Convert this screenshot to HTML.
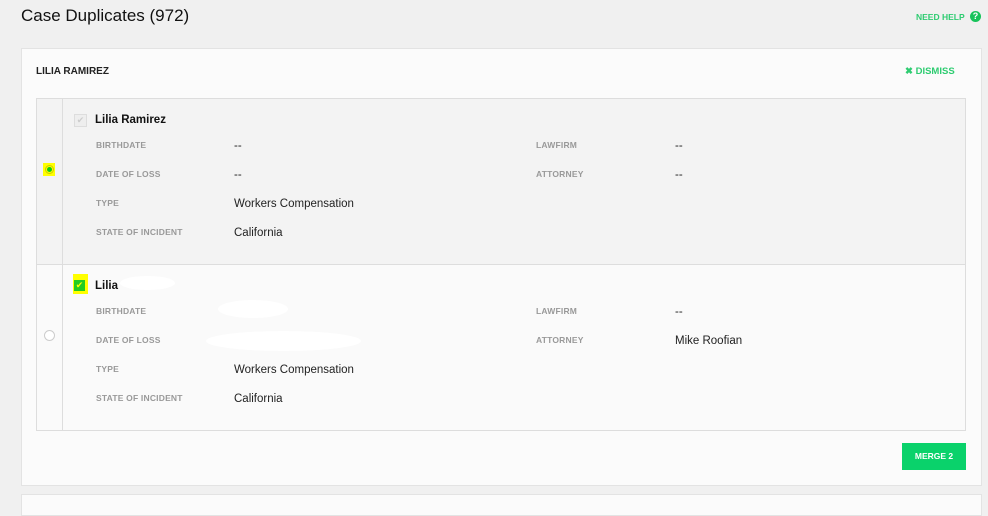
<!DOCTYPE html><html><head><style>
body{margin:0;width:988px;height:501px;background:#f0f0f0;font-family:"Liberation Sans",sans-serif;position:relative;overflow:hidden}
.a{position:absolute;white-space:nowrap}
.lbl{font-size:8.5px;font-weight:bold;color:#999;letter-spacing:.2px}
.val{font-size:11.5px;color:#222}
</style></head><body>
<div class="a" style="left:21px;top:6px;font-size:17px;color:#111">Case Duplicates (972)</div>
<div class="a" style="left:916px;top:12px;font-size:8.5px;font-weight:bold;color:#2ecc71">NEED HELP</div>
<div class="a" style="left:970px;top:11px;width:11px;height:11px;border-radius:50%;background:#17c35a;color:#fff;font-size:9px;font-weight:bold;text-align:center;line-height:11px">?</div>
<div class="a" style="left:21px;top:48px;width:959px;height:436px;background:#fbfbfb;border:1px solid #e3e3e3"></div>
<div class="a" style="left:21px;top:494px;width:959px;height:20px;background:#fbfbfb;border:1px solid #e3e3e3"></div>
<div class="a" style="left:36px;top:66px;font-size:10px;font-weight:bold;color:#222">LILIA RAMIREZ</div>
<div class="a" style="left:905px;top:66px;font-size:9.5px;font-weight:bold;color:#2ecc71">✖ DISMISS</div>
<div class="a" style="left:36px;top:98px;width:928px;height:165px;background:#f3f3f3;border:1px solid #ddd"></div>
<div class="a" style="left:36px;top:264px;width:928px;height:165px;background:#fafafa;border:1px solid #ddd"></div>
<div class="a" style="left:62px;top:98px;width:1px;height:332px;background:#ddd"></div>
<div class="a" style="left:43px;top:163px;width:12px;height:13px;background:#ff0"></div>
<div class="a" style="left:45px;top:165px;width:7px;height:7px;border-radius:50%;border:1px solid #cc0;background:#ff0"></div>
<div class="a" style="left:47px;top:167px;width:5px;height:5px;border-radius:50%;background:#1c1"></div>
<div class="a" style="left:44px;top:330px;width:9px;height:9px;border-radius:50%;border:1px solid #ccc;background:#fff"></div>
<div class="a" style="left:74px;top:114px;width:11px;height:11px;border:1px solid #ddd;background:#eee;color:#ccc;font-size:9px;line-height:11px;text-align:center">✔</div>
<div class="a" style="left:73px;top:274px;width:15px;height:20px;background:#ff0"></div>
<div class="a" style="left:74px;top:280px;width:11px;height:11px;background:#2c2;color:#ff0;font-size:9px;line-height:11px;text-align:center">✔</div>
<div class="a" style="left:95px;top:114px;font-size:11.5px;font-weight:bold;color:#111">Lilia Ramirez</div>
<div class="a" style="left:95px;top:280px;font-size:11.5px;font-weight:bold;color:#111">Lilia</div>
<div class="a lbl" style="left:96px;top:140px">BIRTHDATE</div><div class="a val" style="left:234px;top:140px">--</div>
<div class="a lbl" style="left:536px;top:140px">LAWFIRM</div><div class="a val" style="left:675px;top:140px">--</div>
<div class="a lbl" style="left:96px;top:169px">DATE OF LOSS</div><div class="a val" style="left:234px;top:169px">--</div>
<div class="a lbl" style="left:536px;top:169px">ATTORNEY</div><div class="a val" style="left:675px;top:169px">--</div>
<div class="a lbl" style="left:96px;top:198px">TYPE</div><div class="a val" style="left:234px;top:198px">Workers Compensation</div>
<div class="a lbl" style="left:96px;top:227px">STATE OF INCIDENT</div><div class="a val" style="left:234px;top:227px">California</div>
<div class="a lbl" style="left:96px;top:306px">BIRTHDATE</div>
<div class="a lbl" style="left:536px;top:306px">LAWFIRM</div><div class="a val" style="left:675px;top:306px">--</div>
<div class="a lbl" style="left:96px;top:335px">DATE OF LOSS</div>
<div class="a lbl" style="left:536px;top:335px">ATTORNEY</div><div class="a val" style="left:675px;top:335px">Mike Roofian</div>
<div class="a lbl" style="left:96px;top:364px">TYPE</div><div class="a val" style="left:234px;top:364px">Workers Compensation</div>
<div class="a lbl" style="left:96px;top:393px">STATE OF INCIDENT</div><div class="a val" style="left:234px;top:393px">California</div>
<div class="a" style="left:120px;top:276px;width:55px;height:14px;border-radius:50%;background:#fff"></div>
<div class="a" style="left:218px;top:300px;width:70px;height:18px;border-radius:50%;background:#fff"></div>
<div class="a" style="left:206px;top:331px;width:155px;height:20px;border-radius:50%;background:#fff"></div>
<div class="a" style="left:902px;top:443px;width:64px;height:27px;background:#0ad26b;color:#fff;font-size:8.5px;font-weight:bold;text-align:center;line-height:27px">MERGE 2</div>
</body></html>
